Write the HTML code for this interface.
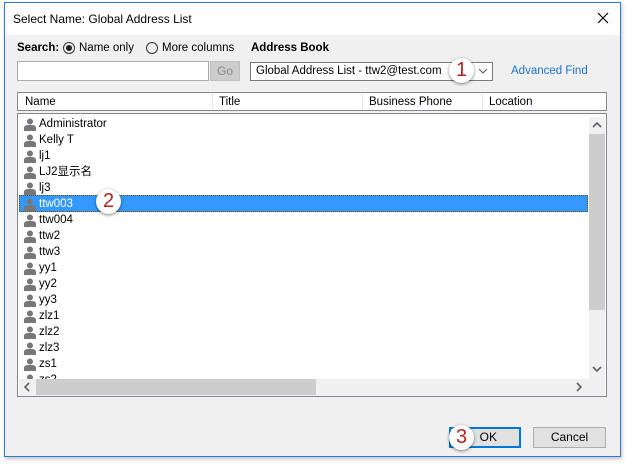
<!DOCTYPE html>
<html><head><style>
*{box-sizing:border-box;margin:0;padding:0}
body{width:628px;height:468px;background:#fff;font-family:"Liberation Sans","Noto Sans CJK SC",sans-serif;font-size:12px;color:#000;position:relative;overflow:hidden}
.abs{position:absolute}
.win{left:4px;top:2px;width:617px;height:455px;border:1px solid #2b7bd3;background:#f0f0f0;box-shadow:1px 2px 4px rgba(0,0,0,.25)}
.title{left:0;top:0;width:615px;height:32px;background:#fff}
.row{position:absolute;left:4px;height:16px;line-height:16px;font-size:11.5px}
.ic{position:absolute;left:0;top:2px;width:12px;height:13px}
.row span{position:absolute;left:15px;white-space:nowrap}
.badge{position:absolute;width:25px;height:25px;border-radius:50%;background:#fff;box-shadow:0 1px 3px rgba(0,0,0,.5);color:#b3261e;font-size:20px;line-height:25px;text-align:center;font-family:"Liberation Sans",sans-serif}
.btn{position:absolute;height:21px;background:#e1e1e1;border:1px solid #adadad;text-align:center;line-height:19px}
</style></head><body>
<div class="abs win">
 <div class="abs title"></div>
 <div class="abs" style="left:8px;top:9px;font-size:12px">Select Name: Global Address List</div>
 <svg class="abs" style="left:592px;top:9px" width="12" height="12"><path d="M1 1L11 11M11 1L1 11" stroke="#000" stroke-width="1.2"/></svg>
</div>
<div class="abs" style="left:17px;top:42px;font-weight:bold;font-size:11.5px">Search:</div>
<div class="abs" style="left:63px;top:42px;width:12px;height:12px;border:1px solid #333;border-radius:50%"><div style="margin:2px;width:6px;height:6px;border-radius:50%;background:#222"></div></div>
<div class="abs" style="left:79px;top:42px;font-size:11.5px">Name only</div>
<div class="abs" style="left:146px;top:42px;width:12px;height:12px;border:1px solid #333;border-radius:50%"></div>
<div class="abs" style="left:162px;top:42px;font-size:11.5px">More columns</div>
<div class="abs" style="left:251px;top:42px;font-weight:bold;font-size:11.5px">Address Book</div>
<div class="abs" style="left:17px;top:61px;width:192px;height:20px;background:#fff;border:1px solid #abadb3"></div>
<div class="abs" style="left:210px;top:61px;width:30px;height:20px;background:#ccc;border:1px solid #bfbfbf;color:#8a8a8a;text-align:center;line-height:18px">Go</div>
<div class="abs" style="left:250px;top:62px;width:243px;height:19px;background:#fff;border:1px solid #7a7a7a;padding-left:5px;line-height:17px;font-size:11.5px">Global Address List - ttw2@test.com</div>
<svg class="abs" style="left:478px;top:68px" width="10" height="7"><path d="M1 1L5 5L9 1" stroke="#555" fill="none"/></svg>
<div class="badge" style="left:449px;top:58px">1</div>
<div class="abs" style="left:511px;top:65px;color:#1a73c8;font-size:11.5px">Advanced Find</div>
<div class="abs" style="left:17px;top:92px;width:590px;height:19px;background:#fff;border:1px solid #828790"></div>
<div class="abs" style="left:212px;top:94px;width:1px;height:15px;background:#e5e5e5"></div>
<div class="abs" style="left:362px;top:94px;width:1px;height:15px;background:#e5e5e5"></div>
<div class="abs" style="left:482px;top:94px;width:1px;height:15px;background:#e5e5e5"></div>
<div class="abs" style="left:25px;top:96px;font-size:11.5px">Name</div>
<div class="abs" style="left:219px;top:96px;font-size:11.5px">Title</div>
<div class="abs" style="left:369px;top:96px;font-size:11.5px">Business Phone</div>
<div class="abs" style="left:489px;top:96px;font-size:11.5px">Location</div>
<div class="abs" style="left:17px;top:113px;width:590px;height:284px;background:#fff;border:1px solid #828790;overflow:hidden">
 <div class="abs" style="left:1px;top:81px;width:569px;height:17px;background:#3399ff;border:1px dotted #7a4a00"></div>
 <div style="position:absolute;left:2px;top:2px;width:560px;height:263px;overflow:hidden">
 <div class="row" style="top:0"><svg class="ic"><circle cx="6" cy="3.5" r="3" fill="#777"/><path d="M0 13V10Q0 7 4 7H8Q12 7 12 10V13Z" fill="#777"/></svg><span>Administrator</span></div>
 <div class="row" style="top:16px"><svg class="ic"><circle cx="6" cy="3.5" r="3" fill="#777"/><path d="M0 13V10Q0 7 4 7H8Q12 7 12 10V13Z" fill="#777"/></svg><span>Kelly T</span></div>
 <div class="row" style="top:32px"><svg class="ic"><circle cx="6" cy="3.5" r="3" fill="#777"/><path d="M0 13V10Q0 7 4 7H8Q12 7 12 10V13Z" fill="#777"/></svg><span>lj1</span></div>
 <div class="row" style="top:48px"><svg class="ic"><circle cx="6" cy="3.5" r="3" fill="#777"/><path d="M0 13V10Q0 7 4 7H8Q12 7 12 10V13Z" fill="#777"/></svg><span>LJ2显示名</span></div>
 <div class="row" style="top:64px"><svg class="ic"><circle cx="6" cy="3.5" r="3" fill="#777"/><path d="M0 13V10Q0 7 4 7H8Q12 7 12 10V13Z" fill="#777"/></svg><span>lj3</span></div>
 <div class="row" style="top:80px;color:#fff"><svg class="ic"><circle cx="6" cy="3.5" r="3" fill="#777"/><path d="M0 13V10Q0 7 4 7H8Q12 7 12 10V13Z" fill="#777"/></svg><span>ttw003</span></div>
 <div class="row" style="top:96px"><svg class="ic"><circle cx="6" cy="3.5" r="3" fill="#777"/><path d="M0 13V10Q0 7 4 7H8Q12 7 12 10V13Z" fill="#777"/></svg><span>ttw004</span></div>
 <div class="row" style="top:112px"><svg class="ic"><circle cx="6" cy="3.5" r="3" fill="#777"/><path d="M0 13V10Q0 7 4 7H8Q12 7 12 10V13Z" fill="#777"/></svg><span>ttw2</span></div>
 <div class="row" style="top:128px"><svg class="ic"><circle cx="6" cy="3.5" r="3" fill="#777"/><path d="M0 13V10Q0 7 4 7H8Q12 7 12 10V13Z" fill="#777"/></svg><span>ttw3</span></div>
 <div class="row" style="top:144px"><svg class="ic"><circle cx="6" cy="3.5" r="3" fill="#777"/><path d="M0 13V10Q0 7 4 7H8Q12 7 12 10V13Z" fill="#777"/></svg><span>yy1</span></div>
 <div class="row" style="top:160px"><svg class="ic"><circle cx="6" cy="3.5" r="3" fill="#777"/><path d="M0 13V10Q0 7 4 7H8Q12 7 12 10V13Z" fill="#777"/></svg><span>yy2</span></div>
 <div class="row" style="top:176px"><svg class="ic"><circle cx="6" cy="3.5" r="3" fill="#777"/><path d="M0 13V10Q0 7 4 7H8Q12 7 12 10V13Z" fill="#777"/></svg><span>yy3</span></div>
 <div class="row" style="top:192px"><svg class="ic"><circle cx="6" cy="3.5" r="3" fill="#777"/><path d="M0 13V10Q0 7 4 7H8Q12 7 12 10V13Z" fill="#777"/></svg><span>zlz1</span></div>
 <div class="row" style="top:208px"><svg class="ic"><circle cx="6" cy="3.5" r="3" fill="#777"/><path d="M0 13V10Q0 7 4 7H8Q12 7 12 10V13Z" fill="#777"/></svg><span>zlz2</span></div>
 <div class="row" style="top:224px"><svg class="ic"><circle cx="6" cy="3.5" r="3" fill="#777"/><path d="M0 13V10Q0 7 4 7H8Q12 7 12 10V13Z" fill="#777"/></svg><span>zlz3</span></div>
 <div class="row" style="top:240px"><svg class="ic"><circle cx="6" cy="3.5" r="3" fill="#777"/><path d="M0 13V10Q0 7 4 7H8Q12 7 12 10V13Z" fill="#777"/></svg><span>zs1</span></div>
 <div class="row" style="top:256px"><svg class="ic"><circle cx="6" cy="3.5" r="3" fill="#777"/><path d="M0 13V10Q0 7 4 7H8Q12 7 12 10V13Z" fill="#777"/></svg><span>zs2</span></div>
 </div>
 <div class="abs" style="left:571px;top:3px;width:16px;height:262px;background:#f0f0f0"></div>
 <div class="abs" style="left:571px;top:20px;width:16px;height:176px;background:#cdcdcd"></div>
 <svg class="abs" style="left:574px;top:8px" width="10" height="6"><path d="M1 5L5 1L9 5" stroke="#606060" stroke-width="1.6" fill="none"/></svg>
 <svg class="abs" style="left:574px;top:252px" width="10" height="6"><path d="M1 1L5 5L9 1" stroke="#606060" stroke-width="1.6" fill="none"/></svg>
 <div class="abs" style="left:1px;top:265px;width:586px;height:17px;background:#f0f0f0"></div>
 <div class="abs" style="left:18px;top:265px;width:280px;height:16px;background:#cdcdcd"></div>
 <svg class="abs" style="left:6px;top:268px" width="6" height="10"><path d="M5 1L1 5L5 9" stroke="#606060" stroke-width="1.6" fill="none"/></svg>
 <svg class="abs" style="left:558px;top:268px" width="6" height="10"><path d="M1 1L5 5L1 9" stroke="#606060" stroke-width="1.6" fill="none"/></svg>
</div>
<div class="badge" style="left:96px;top:189px">2</div>
<div class="btn" style="left:449px;top:427px;width:72px;border:2px solid #0078d7;line-height:17px">&nbsp;&nbsp;OK</div>
<div class="btn" style="left:533px;top:427px;width:73px">Cancel</div>
<div class="badge" style="left:449px;top:425px">3</div>
</body></html>
